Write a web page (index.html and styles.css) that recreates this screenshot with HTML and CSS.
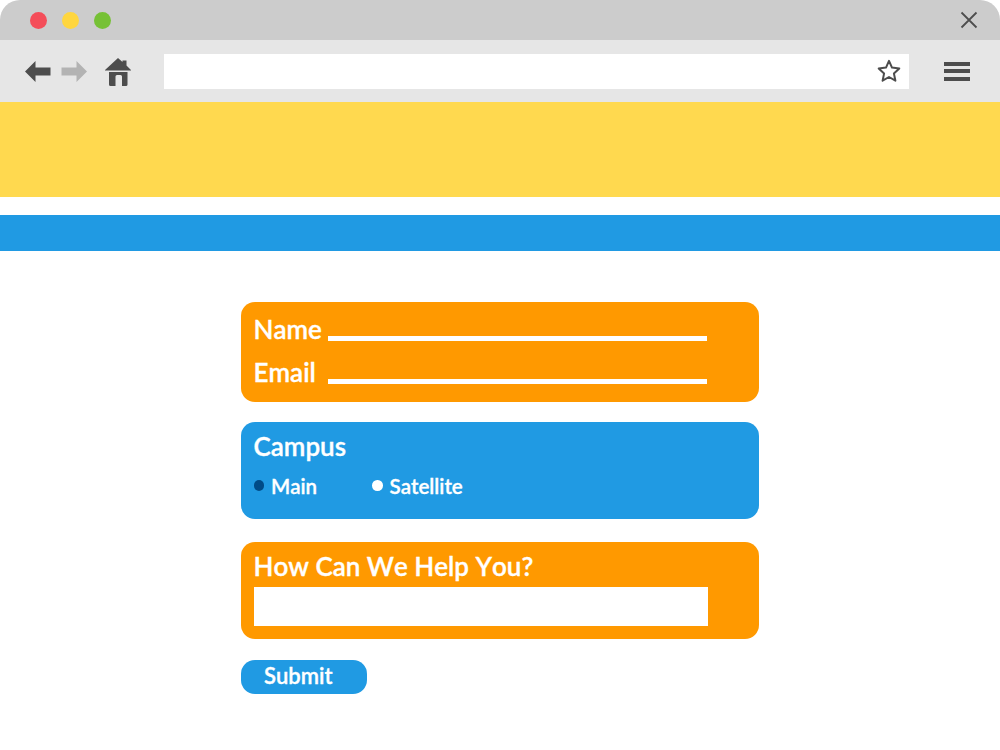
FILE: index.html
```html
<!DOCTYPE html>
<html lang="en">
<head>
  <meta charset="UTF-8">
  <title>Contact form</title>
  <link rel="stylesheet" href="styles.css">
</head>
<body>
  <div class="titlebar">
    <div class="dots">
      <span class="dot dot-red"></span>
      <span class="dot dot-yellow"></span>
      <span class="dot dot-green"></span>
    </div>
    <svg class="close-icon" width="18" height="18" viewBox="0 0 18 18">
      <path d="M1.5 1.5L16.5 16.5M16.5 1.5L1.5 16.5" stroke="#4d4d4d" stroke-width="1.8" fill="none"/>
    </svg>
  </div>

  <div class="toolbar">
    <svg class="nav-arrow" width="26" height="21" viewBox="0 0 26 21">
      <path d="M0 10.5L10.5 0V6.5H25.5V14.5H10.5V21Z" fill="#4d4d4d"/>
    </svg>
    <svg class="nav-arrow nav-forward" width="26" height="21" viewBox="0 0 26 21">
      <path d="M26 10.5L15.5 0V6.5H0.5V14.5H15.5V21Z" fill="#b3b3b3"/>
    </svg>
    <svg class="home-icon" width="26" height="28" viewBox="0 0 26 28">
      <path d="M0 12L13 0L17.500 4V2.500H21.500V7.500L26 12V12.500H0Z" fill="#4d4d4d"/>
      <path d="M4 14H22.500V26.500Q22.500 28 21 28H17V18.500Q17 17 15.500 17H12Q10.500 17 10.500 18.500V28H5.500Q4 28 4 26.500Z" fill="#4d4d4d"/>
    </svg>
    <div class="address">
      <svg width="24" height="24" viewBox="0 0 24 24">
        <path d="M12 1.800L15 8.600L22.300 9.400L16.900 14.400L18.400 21.700L12 18L5.600 21.700L7.100 14.400L1.700 9.400L9 8.600Z" fill="none" stroke="#4d4d4d" stroke-width="2" stroke-linejoin="round"/>
      </svg>
    </div>
    <div class="menu-icon">
      <span></span>
      <span></span>
      <span></span>
    </div>
  </div>

  <div class="banner"></div>
  <div class="navbar"></div>

  <form class="contact-form">
    <div class="card card-orange card-contact">
      <div class="field">
        <label class="field-label">Name</label>
        <span class="field-line"></span>
      </div>
      <div class="field">
        <label class="field-label">Email</label>
        <span class="field-line"></span>
      </div>
    </div>

    <div class="card card-blue card-campus">
      <h2 class="card-title">Campus</h2>
      <div class="radios">
        <span class="radio radio-main"><i class="radio-dot"></i>Main</span>
        <span class="radio"><i class="radio-dot"></i>Satellite</span>
      </div>
    </div>

    <div class="card card-orange card-help">
      <h2 class="card-title">How Can We Help You?</h2>
      <div class="help-box"></div>
    </div>

    <div class="submit-btn">Submit</div>
  </form>
</body>
</html>
```

FILE: styles.css
```css
body {
  margin: 0;
  background: #fff;
  font-family: Lato, "Open Sans", sans-serif;
  font-weight: 600;
  font-kerning: none;
  -webkit-text-stroke: 0.35px #fff;
  color: #fff;
}

.titlebar {
  height: 40px;
  background: #ccc;
  border-radius: 20px 20px 0 0;
  display: flex;
  align-items: center;
  justify-content: space-between;
  padding: 0 22px 0 30px;
}

.dots {
  display: flex;
  gap: 15px;
}

.dot {
  width: 17px;
  height: 17px;
  border-radius: 50%;
}

.dot-red { background: #f44d59; }
.dot-yellow { background: #ffd63f; }
.dot-green { background: #76c135; }

.toolbar {
  height: 62px;
  background: #e6e6e6;
  display: flex;
  align-items: center;
  padding: 0 30px 0 25px;
}

.nav-forward {
  margin-left: 10px;
}

.home-icon {
  margin-left: 18px;
  margin-top: 2px;
}

.address {
  width: 745px;
  height: 35px;
  margin-left: 33px;
  background: #fff;
  display: flex;
  align-items: center;
  justify-content: flex-end;
  padding-right: 8px;
  box-sizing: border-box;
}

.menu-icon {
  margin-left: 35px;
  width: 26px;
  display: flex;
  flex-direction: column;
  gap: 3.500px;
}

.menu-icon span {
  height: 4px;
  background: #4d4d4d;
}

.banner {
  height: 95px;
  background: #ffd94f;
}

.navbar {
  height: 36px;
  margin-top: 18px;
  background: #209ae3;
}

.contact-form {
  width: 518px;
  margin: 51px 0 0 241px;
}

.card {
  border-radius: 14px;
  padding: 0 12.500px;
  box-sizing: border-box;
}

.card-orange { background: #ff9900; }
.card-blue { background: #209ae3; }

.card-contact {
  height: 100px;
  padding-top: 12px;
}

.field {
  display: flex;
  align-items: flex-end;
  height: 30px;
  margin-bottom: 13px;
  font-size: 26px;
  line-height: 30px;
}

.field-label {
  width: 74px;
}

.field-line {
  width: 379.500px;
  height: 5px;
  margin-bottom: 3px;
  background: #fff;
}

.card-campus {
  height: 97px;
  margin-top: 20px;
  padding-top: 9px;
}

.card-title {
  margin: 0;
  font-size: 26px;
  line-height: 30px;
  font-weight: 600;
}

.radios {
  display: flex;
  margin-top: 11.500px;
  font-size: 20.500px;
  line-height: 26px;
}

.radio {
  display: flex;
  align-items: center;
}

.radio-main {
  width: 118.500px;
}

.radio-dot {
  width: 10.500px;
  height: 10.500px;
  margin-right: 7px;
  border-radius: 50%;
  background: #fff;
}

.radio-main .radio-dot {
  background: #004b87;
}

.card-help {
  height: 97px;
  margin-top: 23px;
  padding-top: 9px;
}

.help-box {
  width: 454px;
  height: 39px;
  margin-top: 6px;
  background: #fff;
}

.submit-btn {
  width: 126px;
  height: 33.500px;
  margin-top: 21px;
  padding-left: 23px;
  box-sizing: border-box;
  border-radius: 14px;
  background: #209ae3;
  font-size: 22px;
  line-height: 32px;
}
```
